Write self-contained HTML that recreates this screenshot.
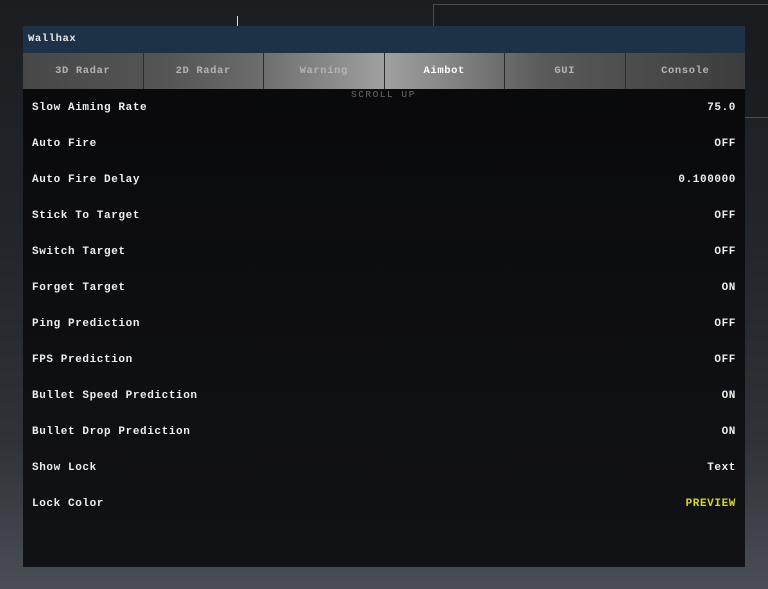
<!DOCTYPE html>
<html><head><style>
html,body{margin:0;padding:0}
body{width:768px;height:589px;position:relative;overflow:hidden;
background:linear-gradient(180deg,#1b1d21 0%,#22252a 40%,#2f3237 75%,#4a4e55 100%);
font-family:"Liberation Mono",monospace;font-weight:bold;font-size:11px;letter-spacing:0.6px}
.rect{position:absolute;left:433px;top:4px;width:340px;height:112px;border:1px solid #4a4c50;border-right:none;background:rgba(20,22,26,0.3)}
.cursor{position:absolute;left:237px;top:16px;width:1px;height:10px;background:#ddd}
.panel{position:absolute;left:23px;top:26px;width:722px;height:541px;
background:linear-gradient(180deg,#08080a 0%,#0d0e10 50%,#111215 100%)}
.hdr{height:27px;background:#1d3247;color:#e6eaee;line-height:26px;padding-left:5px;font-size:10.5px}
.tabs{position:absolute;top:27px;left:0;width:722px;height:36px;display:flex;
background:linear-gradient(90deg,#474747 0%,#555 20%,#6a6a6a 32%,#a0a0a0 50%,#888 58%,#5a5a5a 72%,#3c3c3c 100%)}
.tab{flex:1;border-right:1px solid #2a2a2a;text-align:center;line-height:36px;color:#b4b4b4;font-size:10.5px;position:relative}
.tab:last-child{border-right:none}
.tab.a{color:#fff}
.row{position:absolute;left:9px;right:9px;height:14px;color:#eee}
.row span{position:absolute;right:0;top:0}
.scroll{position:absolute;left:328px;top:63px;color:#6a6a6a;font-size:9.5px;letter-spacing:1.5px;font-weight:normal}
</style></head><body>
<div class="rect"></div>
<div class="cursor"></div>
<div class="panel">
<div class="hdr">Wallhax</div>
<div class="tabs">
<div class="tab">3D Radar</div><div class="tab">2D Radar</div><div class="tab">Warning</div><div class="tab a">Aimbot</div><div class="tab">GUI</div><div class="tab">Console</div>
</div>
<div class="scroll">SCROLL UP</div>
<div class="row" style="top:76px">Slow Aiming Rate<span>75.0</span></div>
<div class="row" style="top:112px">Auto Fire<span>OFF</span></div>
<div class="row" style="top:148px">Auto Fire Delay<span>0.100000</span></div>
<div class="row" style="top:184px">Stick To Target<span>OFF</span></div>
<div class="row" style="top:220px">Switch Target<span>OFF</span></div>
<div class="row" style="top:256px">Forget Target<span>ON</span></div>
<div class="row" style="top:292px">Ping Prediction<span>OFF</span></div>
<div class="row" style="top:328px">FPS Prediction<span>OFF</span></div>
<div class="row" style="top:364px">Bullet Speed Prediction<span>ON</span></div>
<div class="row" style="top:400px">Bullet Drop Prediction<span>ON</span></div>
<div class="row" style="top:436px">Show Lock<span>Text</span></div>
<div class="row" style="top:472px">Lock Color<span style="color:#d8d81a">PREVIEW</span></div>
</div>
</body></html>
